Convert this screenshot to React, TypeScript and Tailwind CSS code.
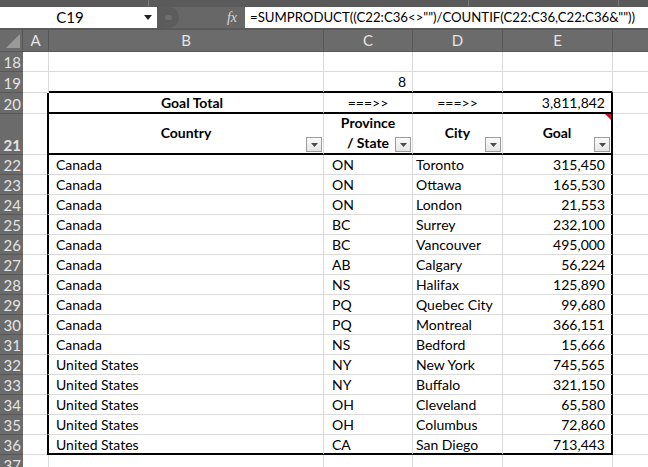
import React from 'react';

const font = { fontFamily: 'Lato, "Open Sans", sans-serif' };

type Row = { n: number; country: string; prov: string; city: string; goal: string };

const rows: Row[] = [
    { n: 22, country: 'Canada', prov: 'ON', city: 'Toronto', goal: '315,450' },
    { n: 23, country: 'Canada', prov: 'ON', city: 'Ottawa', goal: '165,530' },
    { n: 24, country: 'Canada', prov: 'ON', city: 'London', goal: '21,553' },
    { n: 25, country: 'Canada', prov: 'BC', city: 'Surrey', goal: '232,100' },
    { n: 26, country: 'Canada', prov: 'BC', city: 'Vancouver', goal: '495,000' },
    { n: 27, country: 'Canada', prov: 'AB', city: 'Calgary', goal: '56,224' },
    { n: 28, country: 'Canada', prov: 'NS', city: 'Halifax', goal: '125,890' },
    { n: 29, country: 'Canada', prov: 'PQ', city: 'Quebec City', goal: '99,680' },
    { n: 30, country: 'Canada', prov: 'PQ', city: 'Montreal', goal: '366,151' },
    { n: 31, country: 'Canada', prov: 'NS', city: 'Bedford', goal: '15,666' },
    { n: 32, country: 'United States', prov: 'NY', city: 'New York', goal: '745,565' },
    { n: 33, country: 'United States', prov: 'NY', city: 'Buffalo', goal: '321,150' },
    { n: 34, country: 'United States', prov: 'OH', city: 'Cleveland', goal: '65,580' },
    { n: 35, country: 'United States', prov: 'OH', city: 'Columbus', goal: '72,860' },
    { n: 36, country: 'United States', prov: 'CA', city: 'San Diego', goal: '713,443' },
];

// widths: rowhead 23, A 26, B 275, C 89, D 90, E 110
const RowHead: React.FC<{ n: number }> = ({ n }) => (
    <div className="w-[23px] shrink-0 bg-[#6b6b6b] border-b border-[#575757] text-[#e4e4e4] text-[15px] flex items-end justify-end pr-[2px] pb-[1px] leading-none">
        {n}
    </div>
);

const FilterBtn = () => (
    <div className="absolute right-[1px] bottom-[1px] w-[16px] h-[15px] bg-gradient-to-b from-[#fafafa] to-[#e6e6e6] border border-[#9c9c9c] flex items-center justify-center">
        <svg width="7" height="4" viewBox="0 0 7 4"><path d="M0 0h7L3.5 4z" fill="#4a4a4a" /></svg>
    </div>
);

export default function App() {
    return (
        <div className="w-[648px] h-[467px] overflow-hidden bg-white text-black" style={font}>
            {/* formula bar */}
            <div className="h-[30px] bg-[#5a5a5a] pt-[7px] relative">
                <div className="absolute left-[148px] top-0 w-px h-[6px] bg-[#777]" />
                <div className="absolute left-[468px] top-0 w-px h-[6px] bg-[#777]" />
                <div className="absolute left-[618px] top-0 w-px h-[6px] bg-[#777]" />
                <div className="flex h-[21px]">
                    <div className="w-[157px] shrink-0 bg-white flex items-center relative">
                        <span className="w-[140px] text-center text-[15px] leading-none">C19</span>
                        <svg className="absolute left-[144px] top-[8px]" width="8" height="5" viewBox="0 0 8 5"><path d="M0 0h8L4 5z" fill="#222" /></svg>
                    </div>
                    <div className="w-[88px] shrink-0 bg-[#676767] flex items-center rounded-l-[11px]">
                        <div className="w-[22px] h-[21px] rounded-full bg-[#5c5c5c] flex items-center justify-center">
                            <div className="w-[7px] h-[5px] rounded-full bg-[#6e6e6e]" />
                        </div>
                        <span className="ml-auto mr-[8px] text-[#d8d8d8] text-[14px] italic leading-none" style={{ fontFamily: '"Liberation Serif", serif' }}>fx</span>
                    </div>
                    <div className="flex-1 min-w-0 bg-white flex items-center pl-[5px] text-[13.2px] leading-none whitespace-nowrap overflow-hidden">
                        =SUMPRODUCT((C22:C36&lt;&gt;"")/COUNTIF(C22:C36,C22:C36&amp;""))
                    </div>
                </div>
            </div>

            {/* column headers */}
            <div className="flex h-[22px] bg-[#6b6b6b] text-[#e4e4e4] text-[15px] border-b border-[#575757]">
                <div className="w-[23px] border-r border-[#575757] relative">
                    <svg className="absolute right-[2px] bottom-[3px]" width="14" height="14" viewBox="0 0 14 14"><path d="M14 0V14H0z" fill="#9a9a9a" /></svg>
                </div>
                <div className="w-[26px] border-r border-[#575757] flex items-center justify-center">A</div>
                <div className="w-[275px] border-r border-[#575757] flex items-center justify-center">B</div>
                <div className="w-[89px] border-r border-[#575757] flex items-center justify-center">C</div>
                <div className="w-[90px] border-r border-[#575757] flex items-center justify-center">D</div>
                <div className="w-[110px] border-r border-[#575757] flex items-center justify-center">E</div>
                <div className="flex-1" />
            </div>

            {/* row 18 */}
            <div className="flex h-[20px]">
                <RowHead n={18} />
                <div className="w-[26px] border-r border-b border-[#dadada]" />
                <div className="w-[275px] border-r border-b border-[#dadada]" />
                <div className="w-[89px] border-r border-b border-[#dadada]" />
                <div className="w-[90px] border-r border-b border-[#dadada]" />
                <div className="w-[110px] border-r border-b border-[#dadada]" />
                <div className="flex-1 border-b border-[#dadada]" />
            </div>

            {/* row 19 */}
            <div className="flex h-[21px] text-[14px]">
                <RowHead n={19} />
                <div className="w-[26px] border-r border-b border-[#dadada]" />
                <div className="w-[275px] border-r border-[#dadada] border-b-2 border-b-black" />
                <div className="w-[89px] border-r border-[#dadada] border-b-2 border-b-black flex items-end justify-end pr-[6px] leading-[18px]">8</div>
                <div className="w-[90px] border-r border-[#dadada] border-b-2 border-b-black" />
                <div className="w-[110px] border-r border-[#dadada] border-b-2 border-b-black" />
                <div className="flex-1 border-b border-[#dadada]" />
            </div>

            {/* row 20 */}
            <div className="flex h-[21px] text-[14px]">
                <RowHead n={20} />
                <div className="w-[24px] border-b border-[#dadada]" />
                <div className="w-[277px] border-l-2 border-l-black border-r border-r-[#dadada] border-b-2 border-b-black flex items-end justify-center pl-[12px] font-bold leading-[18px]">Goal Total</div>
                <div className="w-[89px] border-r border-[#dadada] border-b-2 border-b-black flex items-end justify-center leading-[18px]">===&gt;&gt;</div>
                <div className="w-[90px] border-r border-[#dadada] border-b-2 border-b-black flex items-end justify-center leading-[18px]">===&gt;&gt;</div>
                <div className="w-[110px] border-r-2 border-r-black border-b-2 border-b-black flex items-end justify-end pr-[6px] leading-[18px]">3,811,842</div>
                <div className="flex-1 border-b border-[#dadada]" />
            </div>

            {/* row 21 header */}
            <div className="flex h-[41px] text-[14px] font-bold">
                <RowHead n={21} />
                <div className="w-[24px] border-b border-[#dadada]" />
                <div className="w-[277px] relative border-l-2 border-l-black border-r border-r-[#dadada] border-b-2 border-b-black flex items-center justify-center pb-[2px]">
                    Country
                    <FilterBtn />
                </div>
                <div className="w-[89px] relative border-r border-[#dadada] border-b-2 border-b-black flex flex-col items-center justify-center leading-[20px] pb-[1px]">
                    <span>Province</span>
                    <span>/ State</span>
                    <FilterBtn />
                </div>
                <div className="w-[90px] relative border-r border-[#dadada] border-b-2 border-b-black flex items-center justify-center pb-[2px]">
                    City
                    <FilterBtn />
                </div>
                <div className="w-[110px] relative border-r-2 border-r-black border-b-2 border-b-black flex items-center justify-center pb-[2px]">
                    Goal
                    <FilterBtn />
                    <svg className="absolute right-0 top-0" width="6" height="6" viewBox="0 0 6 6"><path d="M0 0h6v6z" fill="#c8102e" /></svg>
                </div>
                <div className="flex-1 border-b border-[#dadada]" />
            </div>

            {rows.map((r) => {
                const last = r.n === 36;
                return (
                    <div key={r.n} className="flex h-[20px] text-[14px] leading-[17px]">
                        <RowHead n={r.n} />
                        <div className="w-[24px] border-b border-[#dadada]" />
                        {last ? (
                            <>
                                <div className="w-[277px] border-l-2 border-l-black border-r border-r-[#dadada] border-b-2 border-b-black flex items-end pl-[7px]">{r.country}</div>
                                <div className="w-[89px] border-r border-[#dadada] border-b-2 border-b-black flex items-end pl-[8px]">{r.prov}</div>
                                <div className="w-[90px] border-r border-[#dadada] border-b-2 border-b-black flex items-end pl-[3px]">{r.city}</div>
                                <div className="w-[110px] border-r-2 border-r-black border-b-2 border-b-black flex items-end justify-end pr-[6px]">{r.goal}</div>
                            </>
                        ) : (
                            <>
                                <div className="w-[277px] border-l-2 border-l-black border-r border-r-[#dadada] border-b border-b-[#dadada] flex items-end pl-[7px] pb-[1px]">{r.country}</div>
                                <div className="w-[89px] border-r border-b border-[#dadada] flex items-end pl-[8px] pb-[1px]">{r.prov}</div>
                                <div className="w-[90px] border-r border-b border-[#dadada] flex items-end pl-[3px] pb-[1px]">{r.city}</div>
                                <div className="w-[110px] border-r-2 border-r-black border-b border-b-[#dadada] flex items-end justify-end pr-[6px] pb-[1px]">{r.goal}</div>
                            </>
                        )}
                        <div className="flex-1 border-b border-[#dadada]" />
                    </div>
                );
            })}

            {/* row 37 */}
            <div className="flex h-[20px]">
                <RowHead n={37} />
                <div className="w-[26px] border-r border-b border-[#dadada]" />
                <div className="w-[275px] border-r border-b border-[#dadada]" />
                <div className="w-[89px] border-r border-b border-[#dadada]" />
                <div className="w-[90px] border-r border-b border-[#dadada]" />
                <div className="w-[110px] border-r border-b border-[#dadada]" />
                <div className="flex-1 border-b border-[#dadada]" />
            </div>
        </div>
    );
}
